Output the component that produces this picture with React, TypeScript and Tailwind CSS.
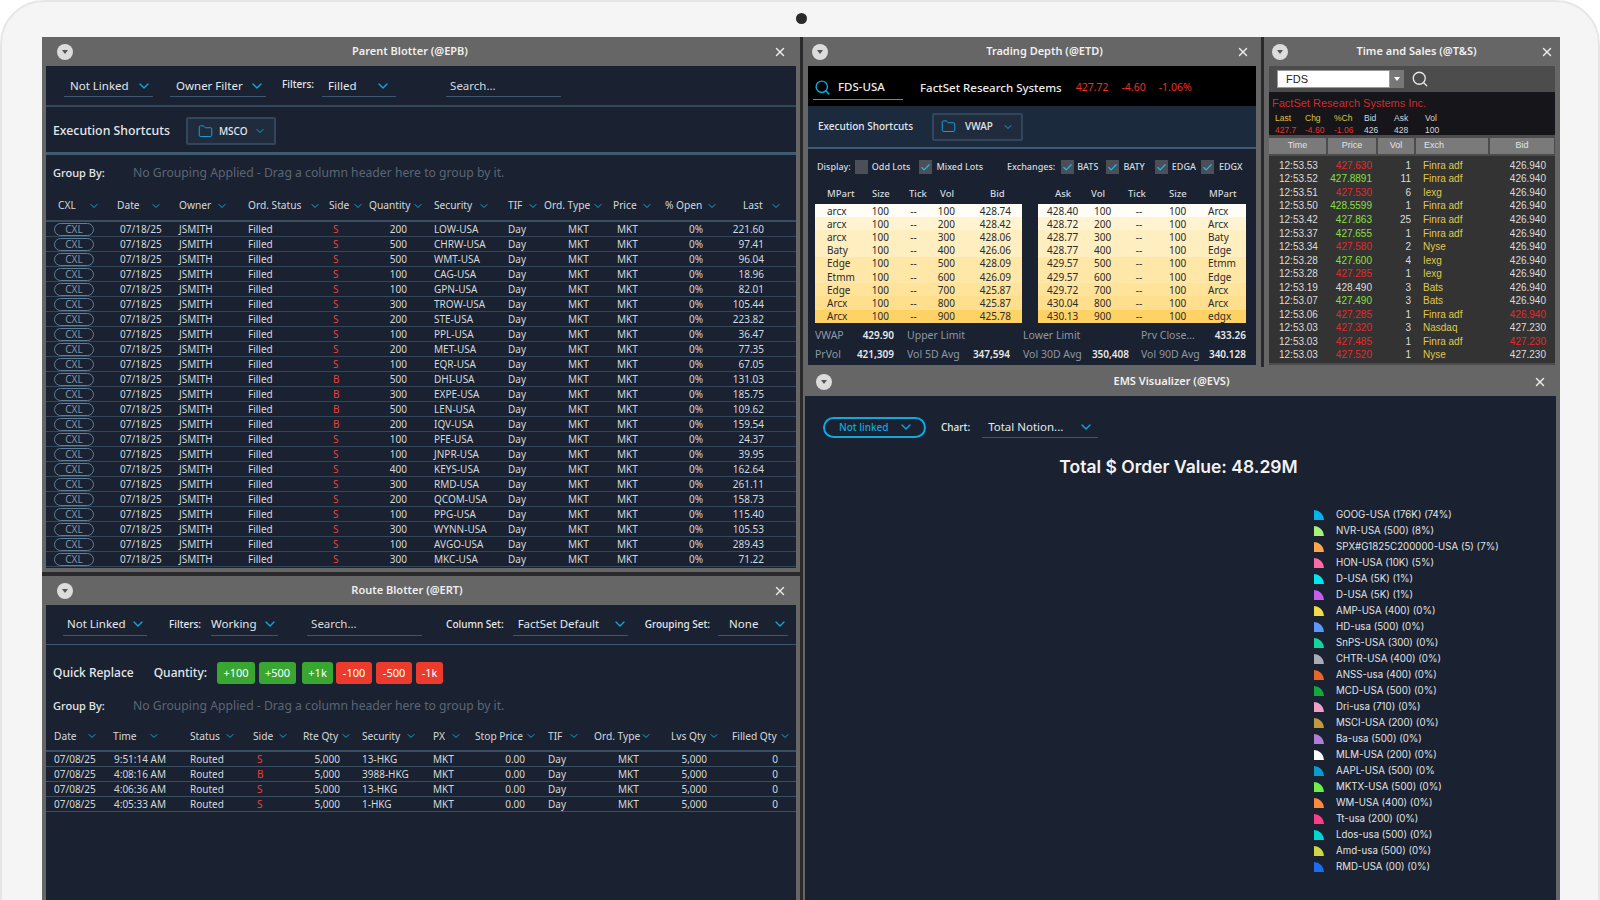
import { ChevronDown, Check, Folder, Search, X } from "lucide-react";
import type { ReactNode } from "react";

const Chev = ({ className = "w-3 h-3" }: { className?: string }) => (
  <ChevronDown className={`${className} shrink-0 text-[#10a8dc]`} strokeWidth={2} />
);

const Win = ({
  title,
  titleClass,
  headerClass,
  className,
  bodyClass,
  children,
}: {
  title: string;
  titleClass: string;
  headerClass: string;
  className: string;
  bodyClass: string;
  children: ReactNode;
}) => (
  <section className={`flex flex-col bg-[#666666] ${className}`}>
    <header className={`flex h-[29px] shrink-0 items-center bg-[#666666] ${headerClass}`}>
      <span className="flex h-4 w-4 items-center justify-center rounded-full bg-[#dcdcdc]">
        <span className="mt-px h-0 w-0 border-x-[3px] border-t-[4px] border-x-transparent border-t-[#555555]" />
      </span>
      <h2 className={`flex-1 text-center text-[11px] font-semibold text-[#f0f0f0] ${titleClass}`}>{title}</h2>
      <X className="h-[14px] w-[14px] text-[#e8e8e8]" strokeWidth={2.5} />
    </header>
    <div className={`min-h-0 flex-1 overflow-hidden ${bodyClass}`}>{children}</div>
  </section>
);

const Select = ({ label, className }: { label: string; className: string }) => (
  <div className={`flex h-[22px] items-center justify-between border-b border-[#40566c] text-[11.5px] text-[#e4e8ec] ${className}`}>
    <span>{label}</span>
    <Chev className="h-4 w-4" />
  </div>
);

type Col = { label: string; head: string; cell: string };

const parentCols: Col[] = [
  { label: "CXL", head: "pl-1 pr-[18px]", cell: "" },
  { label: "Date", head: "pr-[18px]", cell: "pl-[3px]" },
  { label: "Owner", head: "pr-[21px]", cell: "" },
  { label: "Ord. Status", head: "pr-[9px]", cell: "" },
  { label: "Side", head: "pr-[6px]", cell: "pl-1 text-[#e8413c]" },
  { label: "Quantity", head: "pr-[11px]", cell: "pr-[27px] text-right" },
  { label: "Security", head: "pr-[19px]", cell: "" },
  { label: "TIF", head: "pr-[6px]", cell: "" },
  { label: "Ord. Type", head: "pr-[10px]", cell: "pl-6" },
  { label: "Price", head: "pr-[13px]", cell: "pl-1" },
  { label: "% Open", head: "pr-[6px]", cell: "pr-5 text-right" },
  { label: "Last", head: "pl-5", cell: "pr-[17px] text-right" },
];

const parentRows = [
  ["S", "200", "LOW-USA", "221.60"],
  ["S", "500", "CHRW-USA", "97.41"],
  ["S", "500", "WMT-USA", "96.04"],
  ["S", "100", "CAG-USA", "18.96"],
  ["S", "100", "GPN-USA", "82.01"],
  ["S", "300", "TROW-USA", "105.44"],
  ["S", "200", "STE-USA", "223.82"],
  ["S", "100", "PPL-USA", "36.47"],
  ["S", "200", "MET-USA", "77.35"],
  ["S", "100", "EQR-USA", "67.05"],
  ["B", "500", "DHI-USA", "131.03"],
  ["B", "300", "EXPE-USA", "185.75"],
  ["B", "500", "LEN-USA", "109.62"],
  ["B", "200", "IQV-USA", "159.54"],
  ["S", "100", "PFE-USA", "24.37"],
  ["S", "100", "JNPR-USA", "39.95"],
  ["S", "400", "KEYS-USA", "162.64"],
  ["S", "300", "RMD-USA", "261.11"],
  ["S", "200", "QCOM-USA", "158.73"],
  ["S", "100", "PPG-USA", "115.40"],
  ["S", "300", "WYNN-USA", "105.53"],
  ["S", "100", "AVGO-USA", "289.43"],
  ["S", "300", "MKC-USA", "71.22"],
];

const routeCols: Col[] = [
  { label: "Date", head: "pr-4", cell: "" },
  { label: "Time", head: "pr-[31px]", cell: "pl-px" },
  { label: "Status", head: "pr-[18px]", cell: "" },
  { label: "Side", head: "pr-[15px]", cell: "pl-1 text-[#e8413c]" },
  { label: "Rte Qty", head: "pr-[11px]", cell: "pr-[22px] text-right" },
  { label: "Security", head: "pr-[17px]", cell: "" },
  { label: "PX", head: "pr-[14px]", cell: "" },
  { label: "Stop Price", head: "pr-3", cell: "pr-[23px] text-right" },
  { label: "TIF", head: "pr-[15px]", cell: "" },
  { label: "Ord. Type", head: "pr-5", cell: "pl-6" },
  { label: "Lvs Qty", head: "pr-[13px]", cell: "pr-[25px] text-right" },
  { label: "Filled Qty", head: "", cell: "pr-3 text-right" },
];

const routeRows = [
  ["07/08/25", "9:51:14 AM", "Routed", "S", "5,000", "13-HKG", "MKT", "0.00", "Day", "MKT", "5,000", "0"],
  ["07/08/25", "4:08:16 AM", "Routed", "B", "5,000", "3988-HKG", "MKT", "0.00", "Day", "MKT", "5,000", "0"],
  ["07/08/25", "4:06:36 AM", "Routed", "S", "5,000", "13-HKG", "MKT", "0.00", "Day", "MKT", "5,000", "0"],
  ["07/08/25", "4:05:33 AM", "Routed", "S", "5,000", "1-HKG", "MKT", "0.00", "Day", "MKT", "5,000", "0"],
];

const HeadRow = ({ cols, grid }: { cols: Col[]; grid: string }) => (
  <div className={`grid items-center border-b-2 border-[#3a4e62] pl-2 text-[10.2px] text-[#d4d9de] ${grid}`}>
    {cols.map((c) => (
      <div key={c.label} className={`flex items-center justify-between ${c.head}`}>
        <span className="whitespace-nowrap">{c.label}</span>
        <Chev className="-mr-px h-3 w-3" />
      </div>
    ))}
  </div>
);

const GroupBy = ({ className }: { className: string }) => (
  <div className={`flex items-center pl-[7px] ${className}`}>
    <span className="w-[80px] text-[11px] font-medium text-[#e4e8ec]">Group By:</span>
    <span className="text-[12.2px] text-[#5b6674]">No Grouping Applied - Drag a column header here to group by it.</span>
  </div>
);

const Shortcut = ({ label, className }: { label: string; className: string }) => (
  <div className={`flex items-center rounded-[2px] border-2 border-[#33475a] bg-[#202c3d] text-[10px] font-medium text-[#e4e8ec] ${className}`}>
    <Folder className="h-[15px] w-[15px] text-[#10a8dc]" strokeWidth={1.5} />
    <span>{label}</span>
    <Chev className="h-3 w-3" />
  </div>
);

const ParentBlotter = () => (
  <Win
    title="Parent Blotter (@EPB)"
    titleClass="pr-[26px]"
    headerClass="pl-[11px] pr-[9px]"
    className="h-[535px] px-1 pb-1"
    bodyClass="bg-[#1a2130]"
  >
    <div className="flex h-[41px] items-center border-b-2 border-[#33475a] pl-[18px] pt-px">
      <Select label="Not Linked" className="w-[89px] pl-[6px] pr-px" />
      <Select label="Owner Filter" className="ml-[17px] w-[96px] pl-[6px] pr-px" />
      <span className="mb-[3px] ml-4 text-[10px] font-medium text-[#e4e8ec]">Filters:</span>
      <Select label="Filled" className="ml-[8px] w-[74px] pl-[6px] pr-[5px]" />
      <div className="ml-[50px] flex h-[22px] w-[115px] items-center border-b border-[#40566c] pl-1 text-[11.5px] text-[#d4d9de]">Search...</div>
    </div>
    <div className="flex h-[48px] items-center border-b-[3px] border-[#3f5b72] pl-[7px] pt-[3px]">
      <span className="text-[12.3px] font-medium text-[#e4e8ec]">Execution Shortcuts</span>
      <Shortcut label="MSCO" className="ml-4 h-[28px] w-[90px] gap-[6px] pl-[10px]" />
    </div>
    <GroupBy className="h-[37px]" />
    <HeadRow cols={parentCols} grid="h-[30px] grid-cols-[63px_62px_69px_81px_40px_65px_74px_36px_69px_52px_58px_58px]" />
    {parentRows.map(([side, qty, sec, last], i) => (
      <div
        key={i}
        className="grid h-[15px] grid-cols-[63px_62px_69px_81px_40px_65px_74px_36px_69px_52px_58px_58px] items-center border-b border-[#34475a] pl-2 text-[10px] text-[#d4d9de]"
      >
        {[null, "07/18/25", "JSMITH", "Filled", side, qty, sec, "Day", "MKT", "MKT", "0%", last].map((v, j) =>
          j === 0 ? (
            <span key={j} className="flex h-[13px] w-[40px] items-center justify-center rounded-full border border-[#5f7f98] text-[#8197aa]">
              CXL
            </span>
          ) : (
            <span key={j} className={parentCols[j].cell}>{v}</span>
          ),
        )}
      </div>
    ))}
  </Win>
);

const qtyBtns = [
  { t: "+100", c: "w-[38px] bg-[#3aa632]" },
  { t: "+500", c: "ml-[4px] w-[37px] bg-[#3aa632]" },
  { t: "+1k", c: "ml-[6px] w-[31px] bg-[#3aa632]" },
  { t: "-100", c: "ml-[3px] w-[36px] bg-[#ec3b2c]" },
  { t: "-500", c: "ml-[4px] w-[36px] bg-[#ec3b2c]" },
  { t: "-1k", c: "ml-[4px] w-[27px] bg-[#ec3b2c]" },
];

const RouteBlotter = () => (
  <Win
    title="Route Blotter (@ERT)"
    titleClass="pr-[32px]"
    headerClass="pl-[11px] pr-[9px]"
    className="min-h-0 flex-1 px-1"
    bodyClass="bg-[#1a2130]"
  >
    <div className="flex h-[40px] items-center border-b border-[#40566c] pl-[17px] text-[10px] font-medium text-[#e4e8ec]">
      <Select label="Not Linked" className="w-[84px] pl-1 pr-px font-normal" />
      <span className="ml-[22px]">Filters:</span>
      <Select label="Working" className="ml-[10px] w-[67px] font-normal" />
      <div className="ml-[29px] flex h-[22px] w-[115px] items-center border-b border-[#40566c] pl-1 text-[11.5px] font-normal text-[#d4d9de]">Search...</div>
      <span className="ml-[24px]">Column Set:</span>
      <Select label="FactSet Default" className="ml-[9px] w-[115px] pl-[5px] font-normal" />
      <span className="ml-[17px]">Grouping Set:</span>
      <Select label="None" className="ml-2 w-[70px] pl-[11px] font-normal" />
    </div>
    <div className="mt-[17px] flex h-[22px] items-center pl-[7px] text-[12px] font-medium text-[#e4e8ec]">
      <span>Quick Replace</span>
      <span className="ml-[20px]">Quantity:</span>
      <div className="ml-[10px] flex">
        {qtyBtns.map((b) => (
          <span key={b.t} className={`flex h-[22px] items-center justify-center rounded-[3px] text-[11px] font-normal text-white ${b.c}`}>{b.t}</span>
        ))}
      </div>
    </div>
    <GroupBy className="mt-[11px] h-[22px]" />
    <div className="mt-[6px]">
      <HeadRow cols={routeCols} grid="h-[29px] grid-cols-[59px_77px_63px_50px_59px_71px_42px_73px_46px_77px_61px_58px]" />
    </div>
    {routeRows.map((r, i) => (
      <div
        key={i}
        className="grid h-[15px] grid-cols-[59px_77px_63px_50px_59px_71px_42px_73px_46px_77px_61px_58px] items-center border-b border-[#3a4e62] pl-2 text-[10px] text-[#d4d9de]"
      >
        {r.map((v, j) => (
          <span key={j} className={`whitespace-nowrap ${routeCols[j].cell}`}>{v}</span>
        ))}
      </div>
    ))}
  </Win>
);

const Chk = ({ on }: { on?: boolean }) => (
  <span className="flex h-[14px] w-[13px] items-center justify-center bg-[#4b5058]">
    {on && <Check className="h-[11px] w-[11px] text-[#14c0f5]" strokeWidth={2.5} />}
  </span>
);

const depthShades = [
  "bg-[#fffdf5]",
  "bg-[#fff3d2]",
  "bg-[#ffeec0]",
  "bg-[#ffeec0]",
  "bg-[#ffe7a8]",
  "bg-[#ffe7a8]",
  "bg-[#ffe39b]",
  "bg-[#ffdf8e]",
  "bg-[#ffd266]",
];
const bidParts = ["arcx", "arcx", "arcx", "Baty", "Edge", "Etmm", "Edge", "Arcx", "Arcx"];
const bids = ["428.74", "428.42", "428.06", "426.06", "428.09", "426.09", "425.87", "425.87", "425.78"];
const asks = ["428.40", "428.72", "428.77", "428.77", "429.57", "429.57", "429.72", "430.04", "430.13"];
const askParts = ["Arcx", "Arcx", "Baty", "Edge", "Etmm", "Edge", "Arcx", "Arcx", "edgx"];

const TradingDepth = () => (
  <Win
    title="Trading Depth (@ETD)"
    titleClass="pl-[25px]"
    headerClass="pl-1 pr-[6px]"
    className="w-[458px] shrink-0 px-[5px] pb-[2px]"
    bodyClass="bg-[#1a2130]"
  >
    <div className="flex h-[40px] items-center bg-black pt-[3px] text-[11.5px] font-medium text-[#ececec]">
      <div className="ml-[5px] flex h-[24px] w-[90px] items-center gap-[7px] border-b border-[#7a8793] pl-px">
        <Search className="h-[17px] w-[17px] text-[#10a8dc]" strokeWidth={2} />
        <span>FDS-USA</span>
      </div>
      <span className="ml-[17px]">FactSet Research Systems</span>
      <span className="ml-[14px] text-[10.5px] font-normal text-[#e8332c]">427.72</span>
      <span className="ml-[13px] text-[10.5px] font-normal text-[#e8332c]">-4.60</span>
      <span className="ml-[13px] text-[10.5px] font-normal text-[#e8332c]">-1.06%</span>
    </div>
    <div className="flex h-[43px] items-center border-b-2 border-[#3f5b72] bg-[#1c2a3e] pl-[10px] text-[10px] font-medium text-[#e4e8ec]">
      <span>Execution Shortcuts</span>
      <Shortcut label="VWAP" className="ml-[19px] h-[28px] w-[91px] gap-[9px] pl-[7px]" />
    </div>
    <div className="flex h-[36px] items-center pl-[9px] text-[9px] font-medium text-[#d4d9de]">
      <span>Display:</span>
      <span className="ml-[4px]"><Chk /></span>
      <span className="ml-[4px]">Odd Lots</span>
      <span className="ml-[9px]"><Chk on /></span>
      <span className="ml-[4px]">Mixed Lots</span>
      <span className="ml-[24px]">Exchanges:</span>
      <span className="ml-[6px]"><Chk on /></span>
      <span className="ml-[3px]">BATS</span>
      <span className="ml-[8px]"><Chk on /></span>
      <span className="ml-[4px]">BATY</span>
      <span className="ml-[10px]"><Chk on /></span>
      <span className="ml-[4px]">EDGA</span>
      <span className="ml-[5px]"><Chk on /></span>
      <span className="ml-[5px]">EDGX</span>
    </div>
    <div className="flex gap-[16px] pl-[7px] text-[9.5px] font-medium text-[#d4d9de]">
      <div className="grid h-[19px] w-[207px] grid-cols-[46px_36px_33px_25px_67px] items-center">
        <span className="pl-3">MPart</span>
        <span className="pl-[11px]">Size</span>
        <span className="pl-3">Tick</span>
        <span className="pl-[10px]">Vol</span>
        <span className="pl-[35px]">Bid</span>
      </div>
      <div className="grid h-[19px] w-[208px] grid-cols-[47px_35px_38px_40px_48px] items-center">
        <span className="pl-[17px]">Ask</span>
        <span className="pl-[6px]">Vol</span>
        <span className="pl-2">Tick</span>
        <span className="pl-[11px]">Size</span>
        <span className="pl-[11px]">MPart</span>
      </div>
    </div>
    <div className="flex gap-[16px] pl-[7px] text-[10px] text-[#2b2b2b]">
      <div className="w-[207px]">
        {bids.map((b, i) => (
          <div key={i} className={`grid h-[13.2px] grid-cols-[46px_36px_33px_25px_67px] items-center leading-none ${depthShades[i]}`}>
            <span className="pl-3">{bidParts[i]}</span>
            <span className="pr-2 text-right">100</span>
            <span className="text-center">--</span>
            <span className="text-right">{(i + 1) * 100}</span>
            <span className="pr-[11px] text-right">{b}</span>
          </div>
        ))}
      </div>
      <div className="w-[208px]">
        {asks.map((a, i) => (
          <div key={i} className={`grid h-[13.2px] grid-cols-[47px_35px_38px_40px_48px] items-center leading-none ${depthShades[i]}`}>
            <span className="pl-[9px]">{a}</span>
            <span className="pl-[9px]">{(i + 1) * 100}</span>
            <span className="text-center">--</span>
            <span className="pl-[11px]">100</span>
            <span className="pl-[10px]">{askParts[i]}</span>
          </div>
        ))}
      </div>
    </div>
    <div className="mt-[4px] pl-[7px] text-[10.5px] text-[#8e98a3]">
      {[
        ["VWAP", "429.90", "Upper Limit", "", "Lower Limit", "", "Prv Close...", "433.26"],
        ["PrVol", "421,309", "Vol 5D Avg", "347,594", "Vol 30D Avg", "350,408", "Vol 90D Avg", "340.128"],
      ].map((r, i) => (
        <div key={i} className="grid h-[19px] w-[431px] grid-cols-[79px_13px_103px_13px_106px_12px_105px] items-center">
          <span className="flex justify-between"><span>{r[0]}</span><b className="text-[10px] font-semibold text-[#e8e8e8]">{r[1]}</b></span>
          <span />
          <span className="flex justify-between"><span>{r[2]}</span><b className="text-[10px] font-semibold text-[#e8e8e8]">{r[3]}</b></span>
          <span />
          <span className="flex justify-between"><span>{r[4]}</span><b className="text-[10px] font-semibold text-[#e8e8e8]">{r[5]}</b></span>
          <span />
          <span className="flex justify-between"><span>{r[6]}</span><b className="text-[10px] font-semibold text-[#e8e8e8]">{r[7]}</b></span>
        </div>
      ))}
    </div>
  </Win>
);

const tape = [
  ["12:53.53", "427.630", "r", "1", "Finra adf", "426.940", ""],
  ["12:53.52", "427.8891", "g", "11", "Finra adf", "426.940", ""],
  ["12:53.51", "427.530", "r", "6", "Iexg", "426.940", ""],
  ["12:53.50", "428.5599", "g", "1", "Finra adf", "426.940", ""],
  ["12:53.42", "427.863", "g", "25", "Finra adf", "426.940", ""],
  ["12:53.37", "427.655", "g", "1", "Finra adf", "426.940", ""],
  ["12:53.34", "427.580", "r", "2", "Nyse", "426.940", ""],
  ["12:53.28", "427.600", "g", "4", "Iexg", "426.940", ""],
  ["12:53.28", "427.285", "r", "1", "Iexg", "426.940", ""],
  ["12:53.19", "428.490", "", "3", "Bats", "426.940", ""],
  ["12:53.07", "427.490", "g", "3", "Bats", "426.940", ""],
  ["12:53.06", "427.285", "r", "1", "Finra adf", "426.940", "r"],
  ["12:53.03", "427.320", "r", "3", "Nasdaq", "427.230", ""],
  ["12:53.03", "427.485", "r", "1", "Finra adf", "427.230", "r"],
  ["12:53.03", "427.520", "r", "1", "Nyse", "427.230", ""],
];

const tone = (k: string) => (k === "r" ? "text-[#e8282a]" : k === "g" ? "text-[#86e03e]" : "text-[#dcdcdc]");

const TimeAndSales = () => (
  <Win
    title="Time and Sales (@T&S)"
    titleClass="pl-[5px]"
    headerClass="pl-[3px] pr-px"
    className="min-w-0 flex-1 px-[5px] pb-[2px]"
    bodyClass="bg-[#4c4c4c] font-['Liberation_Sans',Arial,sans-serif]"
  >
    <div className="flex h-[26px] items-center pl-2">
      <div className="flex h-[18px] w-[113px] items-center border border-[#999999] bg-white pl-2 text-[11px] text-[#222222]">FDS</div>
      <span className="flex h-[18px] w-[14px] items-center justify-center bg-[#777777]">
        <span className="h-0 w-0 border-x-[3px] border-t-[4px] border-x-transparent border-t-white" />
      </span>
      <Search className="ml-[7px] h-[18px] w-[18px] text-[#e8e8e8]" strokeWidth={1.75} />
    </div>
    <div className="h-[43px] bg-[#15151a] pl-[3px] pt-[5px] text-[8.5px]">
      <div className="text-[11px] leading-[13px] text-[#d42a2a]">FactSet Research Systems Inc.</div>
      <div className="mt-[2px] grid grid-cols-[30px_29px_30px_30px_31px_30px] pl-[3px] leading-[12px] text-[#d8d8d8]">
        <span className="text-[#e0c040]">Last</span>
        <span className="text-[#e0c040]">Chg</span>
        <span className="text-[#e0c040]">%Ch</span>
        <span>Bid</span>
        <span>Ask</span>
        <span>Vol</span>
        <span className="text-[#e8332c]">427.7</span>
        <span className="text-[#e8332c]">-4.60</span>
        <span className="text-[#e8332c]">-1.06</span>
        <span>426</span>
        <span>428</span>
        <span>100</span>
      </div>
    </div>
    <div className="mt-[3px] grid h-[16px] grid-cols-[59px_50px_38px_74px_64px] text-[9px] text-[#e4e4e4]">
      <span className="mr-[2px] flex items-center justify-center bg-[#7a7a7a]">Time</span>
      <span className="mr-[2px] flex items-center justify-center bg-[#7a7a7a]">Price</span>
      <span className="mr-[2px] flex items-center justify-center bg-[#7a7a7a]">Vol</span>
      <span className="mr-[2px] flex items-center bg-[#7a7a7a] pl-2">Exch</span>
      <span className="flex items-center justify-center bg-[#7a7a7a]">Bid</span>
    </div>
    <div className="mt-[2px] h-[207px] bg-[#333333] pt-[3px] text-[10px] text-[#dcdcdc]">
      {tape.map((r, i) => (
        <div key={i} className="grid h-[13.55px] grid-cols-[59px_49px_40px_74px_63px] items-center leading-none">
          <span className="pl-[10px]">{r[0]}</span>
          <span className={`pr-[5px] text-right ${tone(r[2])}`}>{r[1]}</span>
          <span className="pr-[6px] text-right">{r[3]}</span>
          <span className="pl-[6px] text-[#e0c84a]">{r[4]}</span>
          <span className={`pr-2 text-right ${tone(r[6])}`}>{r[5]}</span>
        </div>
      ))}
    </div>
  </Win>
);

const legend = [
  ["GOOG-USA (176K) (74%)", "#00b4f0"],
  ["NVR-USA (500) (8%)", "#a8f07a"],
  ["SPX#G1825C200000-USA (5) (7%)", "#ffa64d"],
  ["HON-USA (10K) (5%)", "#ff6aa8"],
  ["D-USA (5K) (1%)", "#00e5f0"],
  ["D-USA (5K) (1%)", "#c65cf0"],
  ["AMP-USA (400) (0%)", "#f0dc4a"],
  ["HD-usa (500) (0%)", "#5c96ff"],
  ["SnPS-USA (300) (0%)", "#12d6a0"],
  ["CHTR-USA (400) (0%)", "#a8adb8"],
  ["ANSS-usa (400) (0%)", "#e8662a"],
  ["MCD-USA (500) (0%)", "#10aa3c"],
  ["Dri-usa (710) (0%)", "#f0a0c8"],
  ["MSCI-USA (200) (0%)", "#c09a3c"],
  ["Ba-usa (500) (0%)", "#b07ed6"],
  ["MLM-USA (200) (0%)", "#ffffff"],
  ["AAPL-USA (500) (0%", "#0a9ad0"],
  ["MKTX-USA (500) (0%)", "#6cf04a"],
  ["WM-USA (400) (0%)", "#ff8a3c"],
  ["Tt-usa (200) (0%)", "#ff3c8a"],
  ["Ldos-usa (500) (0%)", "#00d6d6"],
  ["Amd-usa (500) (0%)", "#cfd644"],
  ["RMD-USA (00) (0%)", "#1a6cf0"],
];

const Visualizer = () => (
  <Win
    title="EMS Visualizer (@EVS)"
    titleClass="pr-[22px]"
    headerClass="pl-[11px] pr-[9px]"
    className="min-h-0 flex-1 pl-[2px] pr-1"
    bodyClass="bg-[#1a2130]"
  >
    <div className="flex items-center pl-[18px] pt-5">
      <div className="flex h-[21px] w-[103px] items-center justify-between rounded-full border-2 border-[#12a8dc] pl-[14px] pr-[10px] text-[10px] font-medium text-[#12a8dc]">
        <span>Not linked</span>
        <Chev className="h-4 w-4" />
      </div>
      <span className="ml-[15px] text-[10px] font-medium text-[#e4e8ec]">Chart:</span>
      <Select label="Total Notion..." className="ml-[12px] w-[116px] pl-[6px] pr-[4px]" />
    </div>
    <h3 className="mt-[17px] h-[24px] pr-[4px] text-center font-['Inter',sans-serif] text-[17.5px] font-semibold leading-[24px] text-[#f2f2f2]">
      Total $ Order Value: 48.29M
    </h3>
    <ul className="ml-[509px] mt-[28px] font-['Inter',sans-serif] text-[9.7px] text-[#e0e3e6]">
      {legend.map(([t, c], i) => (
        <li key={i} className="flex h-4 items-center gap-3">
          <svg width="10" height="10" viewBox="0 0 10 10" className="shrink-0">
            <path d="M0 0A10 10 0 0 1 10 10H0Z" fill={c} />
          </svg>
          <span className="whitespace-nowrap">{t}</span>
        </li>
      ))}
    </ul>
  </Win>
);

export default function App() {
  return (
    <div className="h-[900px] w-[1600px] overflow-hidden bg-white font-['Noto_Sans',sans-serif]">
      <div className="flex h-[920px] flex-col rounded-t-[44px] border-2 border-[#e6e6e6] bg-[#f5f5f5] pl-[40px] pr-[38px]">
        <div className="flex h-[35px] shrink-0 items-center justify-center">
          <span className="mb-[3px] h-[11px] w-[11px] rounded-full bg-[#2a2a2a]" />
        </div>
        <div className="flex h-[863px] gap-[3px] overflow-hidden bg-[#2a2a2c]">
          <div className="flex w-[758px] shrink-0 flex-col gap-[4px]">
            <ParentBlotter />
            <RouteBlotter />
          </div>
          <div className="flex min-w-0 flex-1 flex-col">
            <div className="flex h-[330px] shrink-0 gap-[3px]">
              <TradingDepth />
              <TimeAndSales />
            </div>
            <Visualizer />
          </div>
        </div>
      </div>
    </div>
  );
}
